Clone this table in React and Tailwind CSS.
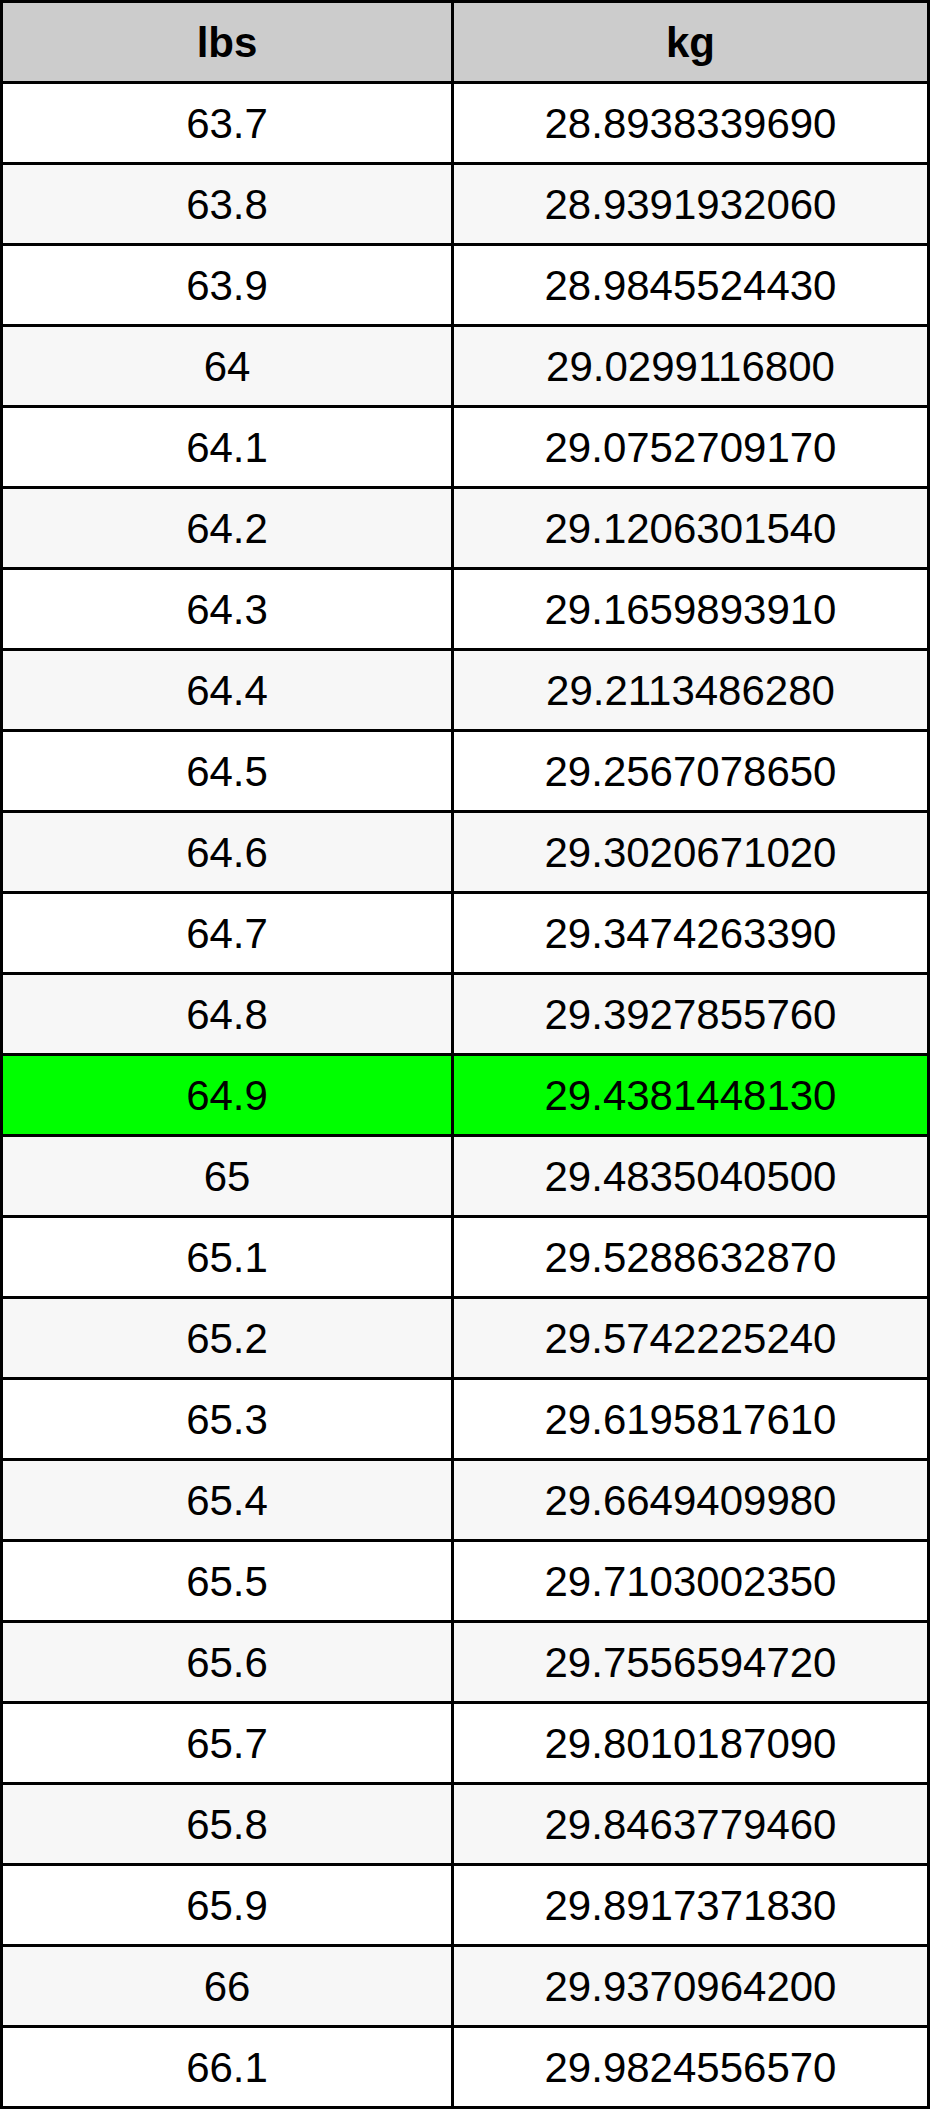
import React from 'react';

const rows = [
    ['63.7', '28.8938339690'],
    ['63.8', '28.9391932060'],
    ['63.9', '28.9845524430'],
    ['64', '29.0299116800'],
    ['64.1', '29.0752709170'],
    ['64.2', '29.1206301540'],
    ['64.3', '29.1659893910'],
    ['64.4', '29.2113486280'],
    ['64.5', '29.2567078650'],
    ['64.6', '29.3020671020'],
    ['64.7', '29.3474263390'],
    ['64.8', '29.3927855760'],
    ['64.9', '29.4381448130'],
    ['65', '29.4835040500'],
    ['65.1', '29.5288632870'],
    ['65.2', '29.5742225240'],
    ['65.3', '29.6195817610'],
    ['65.4', '29.6649409980'],
    ['65.5', '29.7103002350'],
    ['65.6', '29.7556594720'],
    ['65.7', '29.8010187090'],
    ['65.8', '29.8463779460'],
    ['65.9', '29.8917371830'],
    ['66', '29.9370964200'],
    ['66.1', '29.9824556570'],
];

const HIGHLIGHT = '64.9';

export default function App() {
    return (
        <div className="w-[930px] bg-white font-['Liberation_Sans',Arial,sans-serif] text-black">
            <div className="grid grid-cols-[451px_476px] border-t-[3px] border-l-[3px] border-black">
                {/* Header */}
                <div className="h-[81px] flex items-center justify-center border-r-[3px] border-b-[3px] border-black bg-[#cccccc] text-[42px] font-bold">lbs</div>
                <div className="h-[81px] flex items-center justify-center border-r-[3px] border-b-[3px] border-black bg-[#cccccc] text-[42px] font-bold">kg</div>

                {rows.map(([lbs, kg], idx) => {
                    const bg = lbs === HIGHLIGHT ? 'bg-[#00ff00]' : idx % 2 === 1 ? 'bg-[#f7f7f7]' : 'bg-white';
                    return (
                        <React.Fragment key={lbs}>
                            <div className={`h-[81px] flex items-center justify-center border-r-[3px] border-b-[3px] border-black text-[42px] ${bg}`}>{lbs}</div>
                            <div className={`h-[81px] flex items-center justify-center border-r-[3px] border-b-[3px] border-black text-[42px] ${bg}`}>{kg}</div>
                        </React.Fragment>
                    );
                })}
            </div>
        </div>
    );
}
